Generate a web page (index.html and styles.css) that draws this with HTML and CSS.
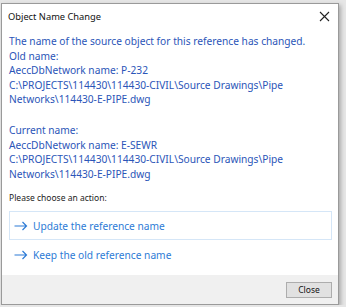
FILE: index.html
```html
<!DOCTYPE html>
<html lang="en">

<head>
    <meta charset="UTF-8">
    <title>Object Name Change</title>
    <link rel="stylesheet" href="styles.css">
</head>

<body>
    <div class="dialog">
        <!-- Title bar -->
        <div class="titlebar">
            <span class="title">Object Name Change</span>
            <span class="close-x">
                <svg width="11" height="11" viewBox="0 0 11 11">
                    <path d="M1 1 L10 10 M10 1 L1 10" stroke="#222" stroke-width="1.1" fill="none" />
                </svg>
            </span>
        </div>

        <!-- Message -->
        <div class="content">
            <div class="message">
                <p>The name of the source object for this reference has changed.<br>
                    Old name:<br>
                    AeccDbNetwork name: P-232<br>
                    C:\PROJECTS\114430\114430-CIVIL\Source Drawings\Pipe Networks\114430-E-PIPE.dwg</p>
                <p class="second">Current name:<br>
                    AeccDbNetwork name: E-SEWR<br>
                    C:\PROJECTS\114430\114430-CIVIL\Source Drawings\Pipe Networks\114430-E-PIPE.dwg</p>
            </div>

            <div class="prompt">Please choose an action:</div>

            <div class="options">
                <div class="option selected">
                    <svg class="arrow" width="14" height="10" viewBox="0 0 14 10">
                        <path d="M0.5 5 H12.5 M8.5 1 L12.5 5 L8.5 9" stroke="#2d7bd6" stroke-width="1.2" fill="none" />
                    </svg>
                    Update the reference name
                </div>
                <div class="option">
                    <svg class="arrow" width="14" height="10" viewBox="0 0 14 10">
                        <path d="M0.5 5 H12.5 M8.5 1 L12.5 5 L8.5 9" stroke="#2d7bd6" stroke-width="1.2" fill="none" />
                    </svg>
                    Keep the old reference name
                </div>
            </div>
        </div>

        <!-- Footer -->
        <div class="footer">
            <button class="close-btn">Close</button>
        </div>
    </div>
</body>

</html>
```

FILE: styles.css
```css
/* Page behind the dialog */
body {
    margin: 0;
    padding: 3px 0 0 1px;
    background-color: #e6e6e6;
    font-family: 'Segoe UI', 'Noto Sans', sans-serif;
}

.dialog {
    width: 336px;
    height: 300px;
    background-color: white;
    border: 1px solid #9a9a9a;
    box-shadow: 2px 2px 4px rgba(0, 0, 0, 0.25);
    display: flex;
    flex-direction: column;
}

/* Title bar */
.titlebar {
    height: 24px;
    display: flex;
    align-items: center;
    justify-content: space-between;
    padding: 0 4px 0 6px;
    font-size: 9.3px;
    color: #111;
}

.close-x {
    width: 20px;
    display: flex;
    justify-content: center;
}

/* Message */
.content {
    flex: 1;
    padding: 6px 6px 0 7px;
}

.message {
    color: #2b55b8;
    font-size: 10.2px;
    line-height: 14.6px;
}

.message p {
    margin: 0;
}

.message .second {
    margin-top: 16px;
}

.prompt {
    font-size: 8.5px;
    color: #222;
    margin-top: 11px;
}

/* Command links */
.options {
    margin-top: 8px;
}

.option {
    box-sizing: border-box;
    height: 29px;
    display: flex;
    align-items: center;
    gap: 5px;
    padding-left: 4px;
    border: 1px solid transparent;
    color: #2d7bd6;
    font-size: 10.2px;
}

.option.selected {
    border-color: #d5e6f7;
}

.arrow {
    flex-shrink: 0;
}

/* Footer */
.footer {
    height: 29px;
    background-color: #f0f0f0;
    display: flex;
    justify-content: flex-end;
    align-items: center;
    padding-right: 6px;
}

.close-btn {
    width: 46px;
    height: 16px;
    padding: 0;
    font-family: inherit;
    font-size: 8.5px;
    color: #111;
    background-color: #e1e1e1;
    border: 1px solid #adadad;
}
```
